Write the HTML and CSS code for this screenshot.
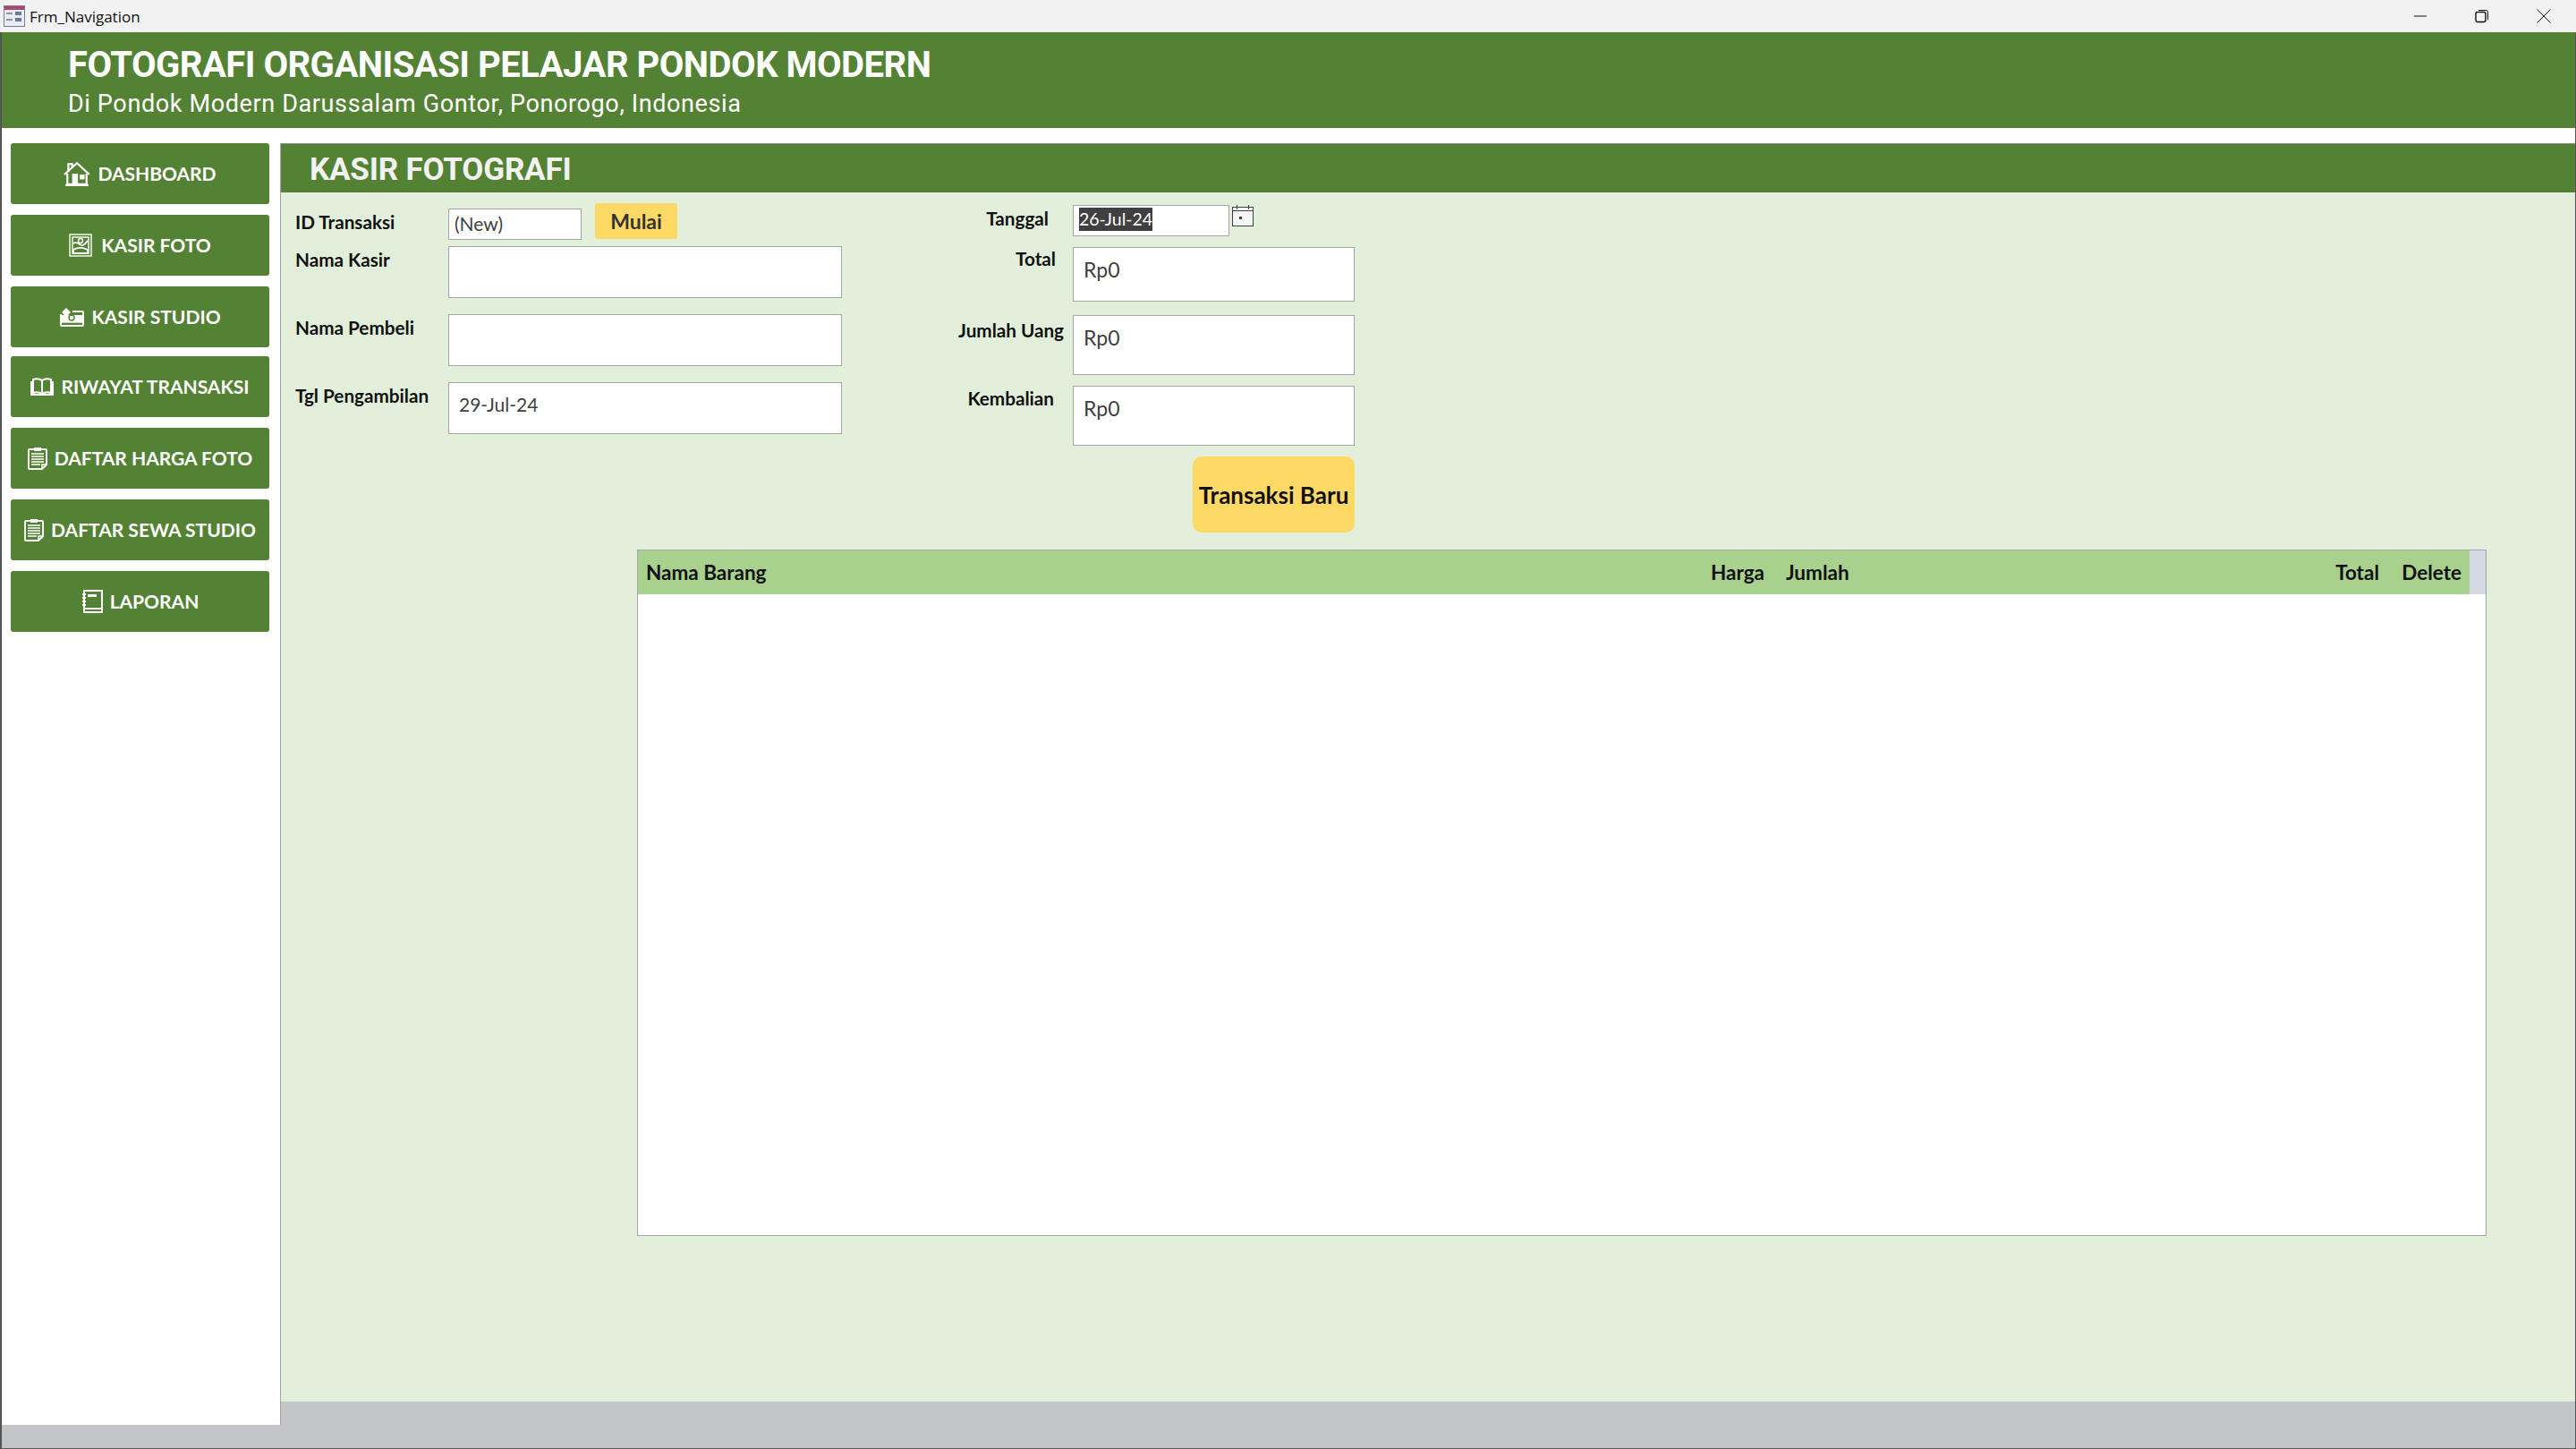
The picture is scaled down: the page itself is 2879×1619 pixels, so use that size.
FILE: index.html
```html
<!DOCTYPE html>
<html lang="id">
<head>
  <meta charset="UTF-8" />
  <meta name="viewport" content="width=device-width, initial-scale=1.0" />
  <title>Frm_Navigation</title>
  <link rel="stylesheet" href="styles.css">
</head>
<body>
  <div class="titlebar">
    <div class="titlebar-name">
      <svg class="form-icon" viewBox="0 0 24 24" width="24" height="24">
        <rect x="0.5" y="0.5" width="23" height="23" fill="#e8edf5" stroke="#7a7f8c"/>
        <rect x="1" y="1" width="22" height="4" fill="#b0456c"/>
        <rect x="3" y="8" width="7" height="2" fill="#8a93a8"/>
        <rect x="13" y="7" width="7" height="4" fill="#6d7a94"/>
        <rect x="3" y="15" width="7" height="2" fill="#8a93a8"/>
        <rect x="13" y="14" width="7" height="4" fill="#6d7a94"/>
      </svg>
      <span>Frm_Navigation</span>
    </div>
    <div class="window-controls">
      <span class="window-btn">
        <svg viewBox="0 0 16 16" width="16" height="16"><path d="M1 8h14" stroke="#111" fill="none"/></svg>
      </span>
      <span class="window-btn">
        <svg viewBox="0 0 16 16" width="16" height="16"><rect x="1" y="3.5" width="11" height="11" rx="2" stroke="#111" stroke-width="1.4" fill="none"/><path d="M4 1.5h8.5a2 2 0 0 1 2 2V12" stroke="#111" fill="none"/></svg>
      </span>
      <span class="window-btn">
        <svg viewBox="0 0 16 16" width="16" height="16"><path d="M.5.5l15 15M15.500.5l-15 15" stroke="#111" fill="none"/></svg>
      </span>
    </div>
  </div>

  <div class="window">
    <header class="app-header">
      <h1>FOTOGRAFI ORGANISASI PELAJAR PONDOK MODERN</h1>
      <p>Di Pondok Modern Darussalam Gontor, Ponorogo, Indonesia</p>
    </header>
    <div class="header-gap"></div>

    <div class="workspace">
      <nav class="sidebar">
        <a class="nav-btn">
          <svg viewBox="0 0 28 26" width="30" height="28"><path d="M1 14 14 2l13 12M5 11V3h4v4M4 13v11h20V13M2 25h24" class="ico"/><rect x="9" y="13" width="6" height="11" class="ico-fill"/><rect x="17" y="14" width="5" height="5" class="ico-fill"/></svg>
          DASHBOARD
        </a>
        <a class="nav-btn nav-foto">
          <svg viewBox="0 0 26 26" width="26" height="26"><rect x="1" y="1" width="24" height="24" class="ico thin"/><rect x="4" y="4" width="18" height="18" class="ico thin"/><path d="M5 11c4-3 6 1 9 2s5-3 7-5M5 18c5-3 10-3 16 0v4H5z" class="ico-fill-line"/><circle cx="13" cy="8" r="2.500" class="ico thin"/></svg>
          KASIR FOTO
        </a>
        <a class="nav-btn">
          <svg viewBox="0 0 28 22" width="28" height="22"><path d="M2 8v12a1 1 0 0 0 1 1h23a1 1 0 0 0 1-1V6a1 1 0 0 0-1-1H15" class="ico"/><path d="M2 17h25" class="ico thin"/><path d="M8 1l5 5-5 5-5-5z" class="ico-fill"/><path d="M2 9h25v8H2z" class="ico-fill soft"/><circle cx="14" cy="12" r="3" class="ico thin dark"/></svg>
          KASIR STUDIO
        </a>
        <a class="nav-btn nav-riwayat">
          <svg viewBox="0 0 26 20" width="26" height="20"><path d="M13 3C10 1 6 1 3 2v15c3-1 7-1 10 1 3-2 7-2 10-1V2c-3-1-7-1-10 1zM13 3v15M1 4v15h24V4" class="ico"/></svg>
          RIWAYAT TRANSAKSI
        </a>
        <a class="nav-btn">
          <svg viewBox="0 0 22 26" width="22" height="26"><path d="M7 3H2a1 1 0 0 0-1 1v20a1 1 0 0 0 1 1h14l5-5V4a1 1 0 0 0-1-1h-5" class="ico"/><rect x="7" y="1" width="8" height="4" class="ico-fill"/><path d="M4 8h14M4 11h14M4 14h14M4 17h14M4 20h10M16 25v-5h5" class="ico thin"/></svg>
          DAFTAR HARGA FOTO
        </a>
        <a class="nav-btn">
          <svg viewBox="0 0 22 26" width="22" height="26"><path d="M7 3H2a1 1 0 0 0-1 1v20a1 1 0 0 0 1 1h14l5-5V4a1 1 0 0 0-1-1h-5" class="ico"/><rect x="7" y="1" width="8" height="4" class="ico-fill"/><path d="M4 8h14M4 11h14M4 14h14M4 17h14M4 20h10M16 25v-5h5" class="ico thin"/></svg>
          DAFTAR SEWA STUDIO
        </a>
        <a class="nav-btn">
          <svg viewBox="0 0 24 26" width="24" height="26"><path d="M3 1h20v24H3zM3 21h20" class="ico"/><path d="M1 5h4M1 9h4M1 13h4M1 17h4" class="ico"/><rect x="7" y="5" width="10" height="3" class="ico-fill"/></svg>
          LAPORAN
        </a>
      </nav>

      <main class="main">
        <h2 class="page-title">KASIR FOTOGRAFI</h2>
        <section class="form-area">
          <div class="form-top">
            <div class="col-left">
              <div class="row row-id">
                <label class="label label-id">ID Transaksi</label>
                <div class="field field-id">(New)</div>
                <button class="btn-mulai">Mulai</button>
              </div>
              <div class="row">
                <label class="label">Nama Kasir</label>
                <div class="field field-wide"></div>
              </div>
              <div class="row">
                <label class="label">Nama Pembeli</label>
                <div class="field field-wide"></div>
              </div>
              <div class="row">
                <label class="label">Tgl Pengambilan</label>
                <div class="field field-wide field-date">29-Jul-24</div>
              </div>
            </div>

            <div class="col-right">
              <div class="row-r row-tanggal">
                <label class="label-r pad-tanggal">Tanggal</label>
                <div class="field field-tanggal"><span class="selected">26-Jul-24</span></div>
                <svg class="cal" viewBox="0 0 24 24" width="24" height="24"><rect x="0.500" y="2.500" width="23" height="21" fill="#f5f5f5" stroke="#404040"/><path d="M0 6.500h24M5.500 0v5M18.500 0v5" stroke="#404040" fill="none"/><rect x="8" y="13" width="3" height="3" fill="#404040"/></svg>
              </div>
              <div class="row-r row-total">
                <label class="label-r pad-total">Total</label>
                <div class="field field-money">Rp0</div>
              </div>
              <div class="row-r row-uang">
                <label class="label-r pad-uang">Jumlah Uang</label>
                <div class="field field-money">Rp0</div>
              </div>
              <div class="row-r row-kembali">
                <label class="label-r pad-kembali">Kembalian</label>
                <div class="field field-money">Rp0</div>
              </div>
              <button class="btn-baru">Transaksi Baru</button>
            </div>
          </div>

          <div class="items">
            <div class="items-head">
              <span class="col-nama">Nama Barang</span>
              <span class="col-num">Harga</span>
              <span class="col-jumlah">Jumlah</span>
              <span class="col-num">Total</span>
              <span class="col-num">Delete</span>
              <span></span>
              <span class="scroll-stub"></span>
            </div>
          </div>
        </section>
        <div class="main-foot"></div>
      </main>
    </div>
    <div class="statusbar"></div>
  </div>
</body>
</html>
```

FILE: styles.css
```css
* {
  box-sizing: border-box;
}

html,
body {
  height: 100%;
}

body {
  margin: 0;
  display: flex;
  flex-direction: column;
  overflow: hidden;
  font-family: 'Lato', sans-serif;
  color: #111;
  background: #f2f2f2;
}

.titlebar {
  height: 36px;
  flex: none;
  display: flex;
  justify-content: space-between;
  background: #f2f2f2;
}

.titlebar-name {
  display: flex;
  align-items: center;
  gap: 5px;
  padding-left: 4px;
  font-family: 'Open Sans', sans-serif;
  font-size: 17px;
  color: #111;
}

.window-controls {
  display: flex;
  padding-right: 2px;
}

.window-btn {
  width: 69px;
  display: flex;
  align-items: center;
  justify-content: center;
}

.window {
  flex: 1;
  display: flex;
  flex-direction: column;
  min-height: 0;
  border-left: 2px solid #555;
  border-right: 1px solid #555;
  border-bottom: 1px solid #555;
  background: #c4c5c9;
}

.app-header {
  height: 107px;
  flex: none;
  padding: 14px 0 0 74px;
  background: #548235;
  color: #fff;
}

.app-header h1 {
  margin: 0;
  font-family: 'Roboto', sans-serif;
  font-size: 40px;
  font-weight: 700;
  letter-spacing: -0.5px;
  line-height: 46px;
}

.app-header p {
  margin: 4px 0 0;
  font-family: 'Roboto', sans-serif;
  font-size: 27px;
  letter-spacing: 0.63px;
  line-height: 32px;
}

.header-gap {
  height: 17px;
  flex: none;
  background: #fff;
}

.workspace {
  flex: 1;
  display: flex;
  min-height: 0;
}

.sidebar {
  width: 312px;
  flex: none;
  display: flex;
  flex-direction: column;
  gap: 12px;
  padding: 0 12px 0 10px;
  background: #fff;
  border-right: 1px solid #a6a6a6;
}

.nav-btn {
  height: 68px;
  flex: none;
  display: flex;
  align-items: center;
  justify-content: center;
  gap: 8px;
  padding-bottom: 1px;
  border-radius: 3px;
  background: #548235;
  color: #fff;
  font-size: 21px;
  font-weight: 700;
}

.nav-foto {
  gap: 10px;
}

.nav-riwayat {
  margin-top: -2px;
}

.ico {
  fill: none;
  stroke: #fff;
  stroke-width: 2;
}

.thin {
  stroke-width: 1.4;
}

.dark {
  stroke: #548235;
}

.soft {
  opacity: 0.95;
}

.ico-fill {
  fill: #fff;
}

.ico-fill-line {
  fill: none;
  stroke: #fff;
  stroke-width: 1.8;
}

.main {
  flex: 1;
  display: flex;
  flex-direction: column;
  min-width: 0;
}

.page-title {
  height: 55px;
  flex: none;
  margin: 0;
  padding-left: 32px;
  border-top: 1px solid #8a8a8a;
  background: #548235;
  color: #f2f2f2;
  font-family: 'Roboto', sans-serif;
  font-size: 35px;
  font-weight: 700;
  letter-spacing: -0.2px;
  line-height: 58px;
}

.form-area {
  flex: 1;
  padding: 12px 0 0 16px;
  background: #e2efda;
}

.main-foot {
  height: 26px;
  flex: none;
}

.statusbar {
  height: 26px;
  flex: none;
}

.form-top {
  display: flex;
  align-items: flex-start;
}

.col-left {
  width: 611px;
  flex: none;
}

.row {
  display: flex;
  align-items: flex-start;
  margin-top: 18px;
}

.row-id {
  height: 40px;
  margin-top: 0;
  margin-bottom: -10px;
}

.label {
  width: 171px;
  flex: none;
  padding-top: 3px;
  font-size: 20.7px;
  font-weight: 700;
  line-height: 24px;
}

.label-id {
  padding-top: 9px;
}

.field {
  background: #fff;
  border: 1px solid #a6a6a6;
  color: #404040;
  font-size: 21px;
}

.field-id {
  width: 149px;
  height: 35px;
  margin-top: 6px;
  padding-left: 6px;
  line-height: 32px;
}

.btn-mulai {
  width: 92px;
  height: 40px;
  margin-left: 15px;
  padding: 0;
  border: none;
  border-radius: 3px;
  background: #ffd966;
  color: #333;
  font-family: inherit;
  font-size: 23px;
  font-weight: 700;
}

.field-wide {
  flex: 1;
  height: 58px;
}

.field-date {
  padding: 10px 0 0 11px;
  line-height: 28px;
}

.col-right {
  width: 454px;
  flex: none;
  margin-left: 119px;
  padding-top: 2px;
  display: flex;
  flex-direction: column;
}

.row-r {
  display: flex;
  align-items: flex-start;
}

.label-r {
  width: 139px;
  flex: none;
  text-align: right;
  font-size: 20.7px;
  font-weight: 700;
  line-height: 24px;
}

.pad-tanggal {
  padding: 3px 27px 0 0;
}

.pad-total {
  padding: 1px 19px 0 0;
}

.pad-uang {
  padding: 5px 10px 0 0;
}

.pad-kembali {
  padding: 2px 21px 0 0;
}

.row-tanggal {
  height: 35px;
}

.field-tanggal {
  width: 175px;
  height: 35px;
  padding: 2px 0 0 6px;
  font-size: 19.5px;
  line-height: 26px;
}

.selected {
  display: inline-block;
  height: 26px;
  background: #404040;
  color: #fff;
}

.cal {
  margin-left: 3px;
}

.field-money {
  flex: 1;
  height: 100%;
  padding: 10px 0 0 11px;
  font-size: 23px;
  line-height: 28px;
}

.row-total {
  height: 61px;
  margin-top: 12px;
}

.row-uang {
  height: 67px;
  margin-top: 15px;
}

.row-kembali {
  height: 67px;
  margin-top: 12px;
}

.btn-baru {
  align-self: flex-end;
  width: 181px;
  height: 85px;
  margin-top: 12px;
  padding: 0;
  border: none;
  border-radius: 10px;
  background: #ffd966;
  color: #111;
  font-family: inherit;
  font-size: 26px;
  font-weight: 700;
}

.items {
  width: 2067px;
  height: 767px;
  margin: 19px 0 0 382px;
  background: #fff;
  border: 1px solid #a6a6a6;
}

.items-head {
  height: 49px;
  display: grid;
  grid-template-columns: 1187px 72px 400px 287px 92px 1fr 18px;
  align-items: center;
  background: #a9d18e;
  font-size: 22.5px;
  font-weight: 700;
  line-height: 43px;
}

.col-nama {
  padding-left: 9px;
}

.col-num {
  text-align: right;
}

.col-jumlah {
  padding-left: 24px;
}

.scroll-stub {
  align-self: stretch;
  background: #d5d9e3;
}
```
